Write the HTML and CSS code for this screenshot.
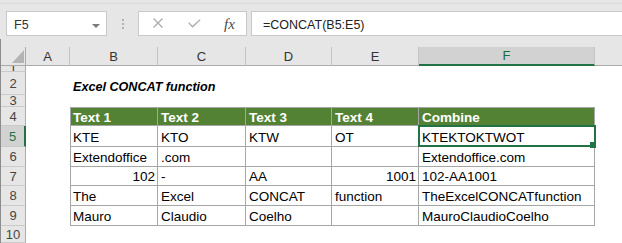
FILE: index.html
```html
<!DOCTYPE html>
<html>
<head>
<meta charset="utf-8">
<link rel="stylesheet" href="styles.css">
</head>
<body>
<div class="toolbar">
  <div class="namebox"><span class="nb-text">F5</span><i class="caret"></i></div>
  <div class="grip"><i></i><i></i><i></i></div>
  <div class="fxbox">
    <svg class="ic-x" width="10" height="10" viewBox="0 0 10 10"><path d="M0.5 0.5 L9.5 9.5 M9.5 0.5 L0.5 9.5" stroke="#a9a9a9" stroke-width="1.2" fill="none"/></svg>
    <svg class="ic-ok" width="13" height="9" viewBox="0 0 13 9"><path d="M0.6 3.6 L4.6 7.8 L12.2 0.6" stroke="#a9a9a9" stroke-width="1.3" fill="none"/></svg>
    <span class="fx">fx</span>
  </div>
  <div class="formula">=CONCAT(B5:E5)</div>
</div>
<div class="sheet">
  <div class="corner"><i></i></div>
  <div class="ch">A</div><div class="ch">B</div><div class="ch">C</div><div class="ch">D</div><div class="ch">E</div><div class="ch sel">F</div><div class="ch last"></div>

  <div class="rh">1</div><div></div><div></div><div></div><div></div><div></div><div></div><div></div>

  <div class="rh">2</div><div></div><div class="c title">Excel CONCAT function</div><div></div><div></div><div></div><div></div><div></div>

  <div class="rh">3</div><div></div><div></div><div></div><div></div><div></div><div></div><div></div>

  <div class="rh">4</div><div></div>
  <div class="c t tl th">Text 1</div><div class="c t th">Text 2</div><div class="c t th">Text 3</div><div class="c t th">Text 4</div><div class="c t th">Combine</div><div></div>

  <div class="rh sel">5</div><div></div>
  <div class="c t tl">KTE</div><div class="c t">KTO</div><div class="c t">KTW</div><div class="c t">OT</div><div class="c t active">KTEKTOKTWOT</div><div></div>

  <div class="rh">6</div><div></div>
  <div class="c t tl">Extendoffice</div><div class="c t">.com</div><div class="c t"></div><div class="c t"></div><div class="c t">Extendoffice.com</div><div></div>

  <div class="rh">7</div><div></div>
  <div class="c t tl num">102</div><div class="c t">-</div><div class="c t">AA</div><div class="c t num">1001</div><div class="c t">102-AA1001</div><div></div>

  <div class="rh">8</div><div></div>
  <div class="c t tl">The</div><div class="c t">Excel</div><div class="c t">CONCAT</div><div class="c t">function</div><div class="c t">TheExcelCONCATfunction</div><div></div>

  <div class="rh">9</div><div></div>
  <div class="c t tl">Mauro</div><div class="c t">Claudio</div><div class="c t">Coelho</div><div class="c t"></div><div class="c t">MauroClaudioCoelho</div><div></div>

  <div class="rh">10</div><div></div><div></div><div></div><div></div><div></div><div></div><div></div>
</div>
</body>
</html>
```

FILE: styles.css
```css
html, body {
  margin: 0;
  padding: 0;
}
body {
  width: 622px;
  height: 243px;
  overflow: hidden;
  background: #fff;
  font-family: "Liberation Sans", Arial, sans-serif;
}
* { box-sizing: border-box; }

/* ---------- formula bar ---------- */
.toolbar {
  height: 47px;
  padding-top: 11px;
  display: flex;
  align-items: flex-start;
  background:
    linear-gradient(#8c8c8c, #8c8c8c) 0 39px / 1px 8px no-repeat,
    linear-gradient(#dadada, #dadada) 0 3px / 100% 1px no-repeat,
    #e6e6e6;
}
.namebox {
  margin-left: 6px;
  width: 101px;
  height: 25px;
  background: #fff;
  border: 1px solid #c9c9c9;
  display: flex;
  align-items: flex-start;
  justify-content: space-between;
  padding: 3px 6px 0 7px;
  font-size: 12.5px;
  line-height: 20px;
  color: #333;
}
.caret {
  margin-top: 9px;
  width: 0;
  height: 0;
  border-left: 4px solid transparent;
  border-right: 4px solid transparent;
  border-top: 4px solid #7a7a7a;
}
.grip {
  width: 31px;
  height: 25px;
  display: flex;
  flex-direction: column;
  align-items: center;
  justify-content: center;
  gap: 2px;
}
.grip i {
  width: 2px;
  height: 2px;
  background: #b3b3b3;
}
.fxbox {
  width: 109px;
  height: 25px;
  background: #fff;
  border: 1px solid #c9c9c9;
  display: flex;
  align-items: center;
  padding-left: 14px;
}
.ic-x { margin-top: -1px; }
.ic-ok { margin-left: 25px; margin-top: -1px; }
.fx {
  margin-left: 23px;
  font-family: "Liberation Serif", "Times New Roman", serif;
  font-style: italic;
  font-size: 15px;
  color: #4a4a4a;
  line-height: 20px;
}
.formula {
  margin-left: 4px;
  flex: 1;
  height: 25px;
  background: #fff;
  border: 1px solid #c9c9c9;
  border-right: none;
  padding: 3px 0 0 11px;
  font-size: 12.5px;
  line-height: 20px;
  color: #222;
}

/* ---------- sheet grid ---------- */
.sheet {
  height: 196px;
  border-left: 1px solid #8c8c8c;
  display: grid;
  grid-template-columns: 25px 44px 88px 88px 86px 87px 176px 1fr;
  grid-template-rows: 19px 6px 23px 12px 19px 21px 20px 19px 20px 20px 1fr;
}
.corner {
  background: #e6e6e6;
  border-right: 1px solid #ababab;
  border-bottom: 1px solid #ababab;
  display: flex;
  justify-content: flex-end;
  align-items: flex-end;
  padding: 0 1px 2px 0;
}
.corner i {
  width: 12px;
  height: 13px;
  background: #b4b4b4;
  clip-path: polygon(100% 0, 100% 100%, 0 100%);
}
.ch {
  background: #e6e6e6;
  border-right: 1px solid #c4c4c4;
  border-bottom: 1px solid #ababab;
  display: flex;
  align-items: center;
  justify-content: center;
  font-size: 13px;
  color: #333;
}
.ch.sel {
  background: #d2d2d2;
  border-bottom: 2px solid #217346;
  color: #1f6b3e;
}
.ch.last { border-right: none; }
.rh {
  background: #e6e6e6;
  border-right: 1px solid #ababab;
  border-bottom: 1px solid #cacaca;
  display: flex;
  align-items: center;
  justify-content: center;
  overflow: hidden;
  font-size: 13px;
  line-height: 13px;
  color: #444;
}
.rh.sel {
  background: #d2d2d2;
  border-right: 2px solid #217346;
  color: #217346;
}

/* ---------- cells ---------- */
.c {
  display: flex;
  align-items: flex-end;
  padding: 0 2px 0 3px;
  font-size: 13.5px;
  line-height: 16px;
  white-space: nowrap;
  color: #000;
}
.t {
  border-right: 1px solid #a6a6a6;
  border-bottom: 1px solid #a6a6a6;
}
.tl {
  border-left: 1px solid #a6a6a6;
  padding-left: 2px;
}
.th {
  border-top: 1px solid #a6a6a6;
  background: #548235;
  color: #fff;
  font-weight: bold;
  line-height: 15px;
}
.num { justify-content: flex-end; }
.title {
  font-weight: bold;
  font-style: italic;
  font-size: 12.6px;
  overflow: visible;
}
.active { position: relative; }
.active::before {
  content: "";
  position: absolute;
  top: -1px;
  left: -1px;
  right: -2px;
  bottom: -1px;
  border: 2px solid #217346;
}
.active::after {
  content: "";
  position: absolute;
  right: -2px;
  bottom: -2px;
  width: 6px;
  height: 6px;
  background: #217346;
}
```
